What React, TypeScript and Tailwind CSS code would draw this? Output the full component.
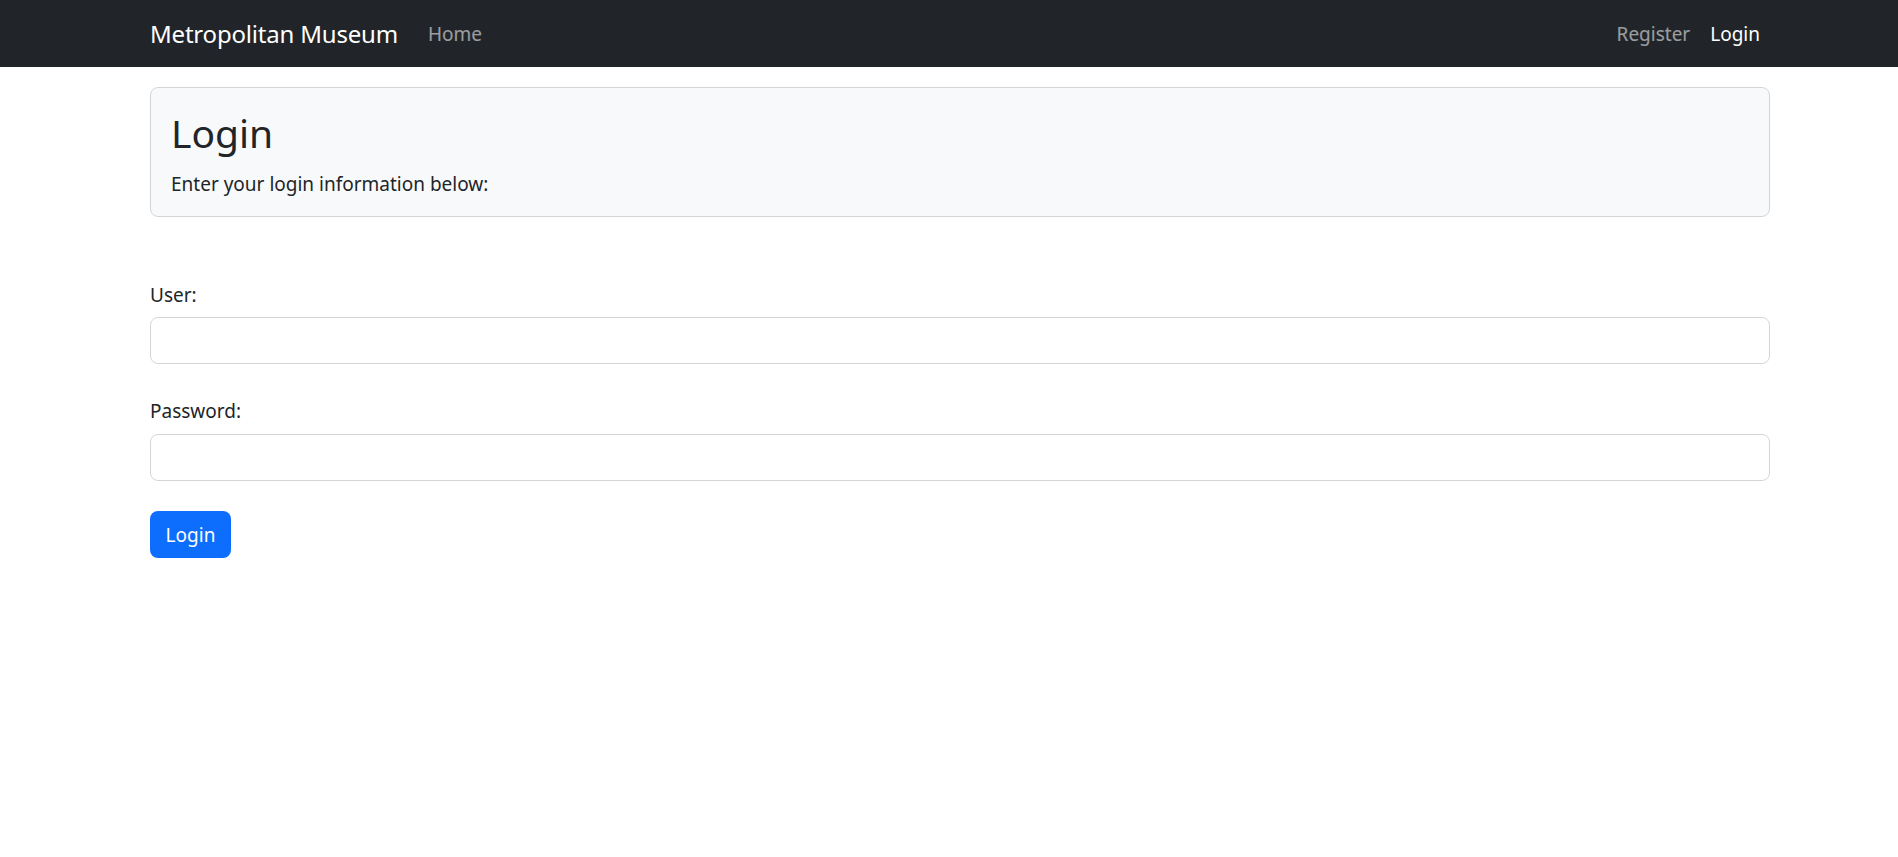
import React from 'react';

const font = { fontFamily: '"Noto Sans", "Open Sans", sans-serif' };

const Navbar: React.FC = () => (
  <nav className="w-full h-[67px] bg-[#212529]">
    <div className="ml-[150px] w-[1620px] h-full flex items-center justify-between">
      <div className="flex items-center">
        <a href="#" className="text-white text-[24px] tracking-[-0.2px] leading-[38px] mr-[20px]">Metropolitan Museum</a>
        <a href="#" className="px-[10px] text-[19px] leading-[30px] text-white/55">Home</a>
      </div>
      <div className="flex items-center">
        <a href="#" className="px-[10px] text-[19px] leading-[30px] text-white/55">Register</a>
        <a href="#" className="px-[10px] text-[19px] leading-[30px] text-white">Login</a>
      </div>
    </div>
  </nav>
);

const App: React.FC = () => {
  return (
    <div className="min-h-screen bg-white text-[#212529]" style={font}>
      <Navbar />
      <main className="ml-[150px] w-[1620px]">
        {/* header box */}
        <div className="mt-[20px] h-[130px] border border-[#d3d6d9] rounded-[8px] bg-[#f8f9fa] pt-[20px] px-[20px]">
          <h1 className="text-[39px] leading-[50px] mb-[11px] font-normal">Login</h1>
          <p className="text-[19px] leading-[30px]">Enter your login information below:</p>
        </div>

        <form className="mt-[63px]" onSubmit={(e) => e.preventDefault()}>
          <label className="block text-[19px] leading-[30px] mb-[7px]">User:</label>
          <input type="text" className="block w-full h-[47px] border border-[#d3d6d9] rounded-[8px] bg-white px-[15px] text-[19px] outline-none" />

          <label className="block text-[19px] leading-[30px] mt-[32px] mb-[8px]">Password:</label>
          <input type="password" className="block w-full h-[47px] border border-[#d3d6d9] rounded-[8px] bg-white px-[15px] text-[19px] outline-none" />

          <button type="submit" className="mt-[30px] h-[47px] w-[81px] bg-[#0d6efd] text-white text-[19px] leading-[30px] rounded-[8px]">
            Login
          </button>
        </form>
      </main>
    </div>
  );
};

export default App;
